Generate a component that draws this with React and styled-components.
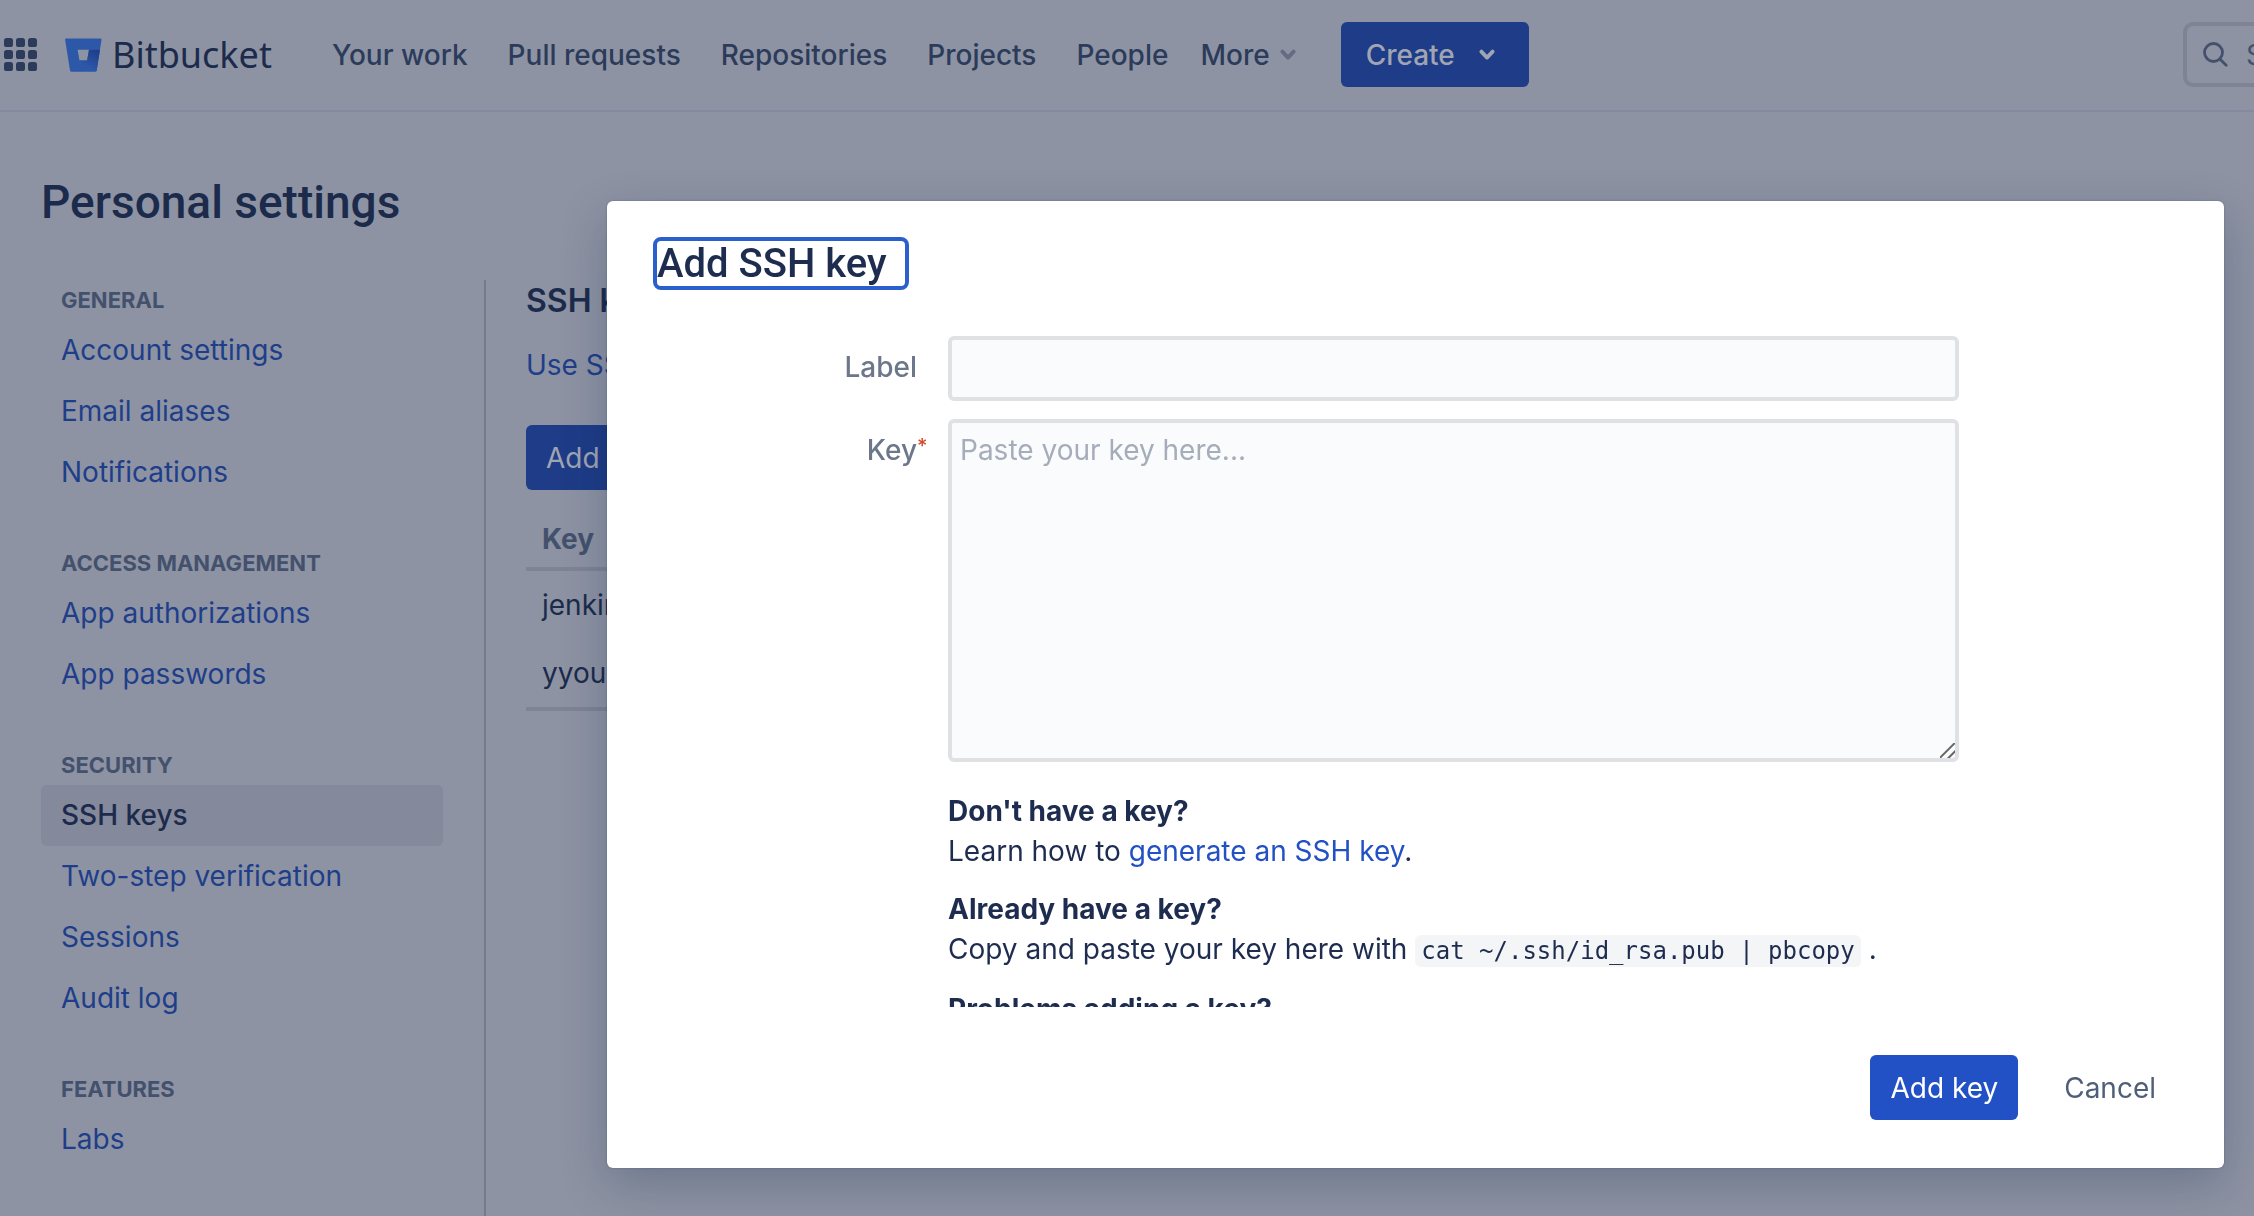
import React from "react";
import styled, { createGlobalStyle } from "styled-components";

const color = {
  page: "#8d93a3",
  heading: "#1c2b4b",
  nav: "#2c3b5a",
  muted: "#44516d",
  link: "#1f3e8a",
  primaryDim: "#1e3c87",
  lineSoft: "#858aa0",
  line: "#7e8495",
  divider: "#747b8c",
  selected: "#84899c",
  text: "#1d2c4f",
  primary: "#2250c5",
  label: "#6c778c",
  field: "#fafbfd",
  fieldBorder: "#dfe1e5",
};

const GlobalStyle = createGlobalStyle`
  * { box-sizing: border-box; }
  html, body, #root { height: 100%; }
  body {
    margin: 0;
    overflow: hidden;
    background: ${color.page};
    color: ${color.heading};
    font-family: Inter, "Liberation Sans", sans-serif;
    font-size: 28px;
    line-height: 40px;
  }
  h1, h2, h3, p, ul { margin: 0; padding: 0; }
  a { text-decoration: none; color: inherit; }
  button, input, textarea { font: inherit; }
`;

const Page = styled.div`
  display: flex;
  flex-direction: column;
  min-height: 100%;
`;

const TopBar = styled.header`
  display: flex;
  align-items: center;
  height: 112px;
  padding: 0 0 1px 4px;
  border-bottom: 2px solid ${color.lineSoft};
  overflow: hidden;
`;

const SwitcherButton = styled.button`
  display: flex;
  padding: 0;
  border: 0;
  background: none;
`;

const Brand = styled.a`
  display: flex;
  align-items: center;
  gap: 10px;
  margin-left: 28px;
  font-family: "Noto Sans", "Open Sans", sans-serif;
  font-size: 36px;
  color: ${color.heading};
`;

const NavList = styled.nav`
  display: flex;
  gap: 40px;
  margin-left: 60px;
  font-weight: 500;
  color: ${color.nav};
`;

const MoreButton = styled.button`
  display: flex;
  align-items: center;
  gap: 10px;
  margin-left: 32px;
  padding: 0;
  border: 0;
  background: none;
  font-weight: 500;
  color: ${color.nav};
`;

const Button = styled.button`
  display: inline-flex;
  align-items: center;
  gap: 24px;
  height: 65px;
  padding: 0 20px;
  border: 0;
  border-radius: 6px;
  white-space: nowrap;
  color: ${(p) => (p.$dim ? "#a0a5b3" : "#fff")};
  background: ${(p) => (p.$dim ? color.primaryDim : color.primary)};
`;

const CreateButton = styled(Button)`
  margin-left: 45px;
  padding: 0 34px 0 25px;
  font-weight: 500;
`;

const SearchBox = styled.label`
  display: flex;
  align-items: center;
  gap: 18px;
  width: 280px;
  height: 65px;
  flex: none;
  margin: 0 -209px 0 auto;
  padding-left: 16px;
  border: 4px solid ${color.line};
  border-radius: 10px;
  color: ${color.muted};
`;

const SearchInput = styled.input`
  width: 180px;
  padding: 0;
  border: 0;
  outline: 0;
  background: none;
  color: ${color.muted};
  &::placeholder { color: ${color.muted}; opacity: 1; }
`;

const PageTitle = styled.h1`
  padding: 60px 0 0 41px;
  font-family: Roboto, Inter, sans-serif;
  font-size: 46px;
  line-height: 60px;
  font-weight: 500;
`;

const Columns = styled.div`
  display: flex;
  flex: 1;
  margin-top: 48px;
`;

const Sidebar = styled.nav`
  width: 486px;
  flex: none;
  padding: 0 41px;
  border-right: 2px solid ${color.divider};
`;

const Group = styled.section`
  margin-bottom: 40px;
`;

const GroupTitle = styled.h3`
  padding-left: 20px;
  font-size: 22px;
  font-weight: 700;
  text-transform: uppercase;
  color: ${color.muted};
`;

const SideLink = styled.a`
  display: block;
  padding-left: 20px;
  border-radius: 6px;
  line-height: 61px;
  font-weight: ${(p) => (p.$active ? 500 : 400)};
  color: ${(p) => (p.$active ? color.heading : color.link)};
  background: ${(p) => (p.$active ? color.selected : "none")};
`;

const Main = styled.main`
  flex: 1;
  display: flex;
  flex-direction: column;
  align-items: flex-start;
  padding: 0 80px 0 40px;
`;

const SectionTitle = styled.h2`
  font-size: 32px;
  line-height: 42px;
  font-weight: 600;
`;

const HelpLink = styled.a`
  margin: 23px 0 40px;
  color: ${color.link};
`;

const KeyTable = styled.table`
  width: 100%;
  margin-top: 20px;
  border-collapse: collapse;
  border-bottom: 4px solid ${color.line};
  th {
    height: 59px;
    padding: 0 0 0 16px;
    border-bottom: 4px solid ${color.line};
    text-align: left;
    font-weight: 700;
    color: ${color.muted};
  }
  td {
    height: 70px;
    padding: 0 0 0 16px;
  }
`;

const Blanket = styled.div`
  position: fixed;
  inset: 0;
  display: flex;
  justify-content: flex-end;
  padding: 201px 30px 48px;
`;

const Dialog = styled.section`
  flex: 0 1 1617px;
  display: flex;
  flex-direction: column;
  border-radius: 6px;
  background: #fff;
  color: ${color.text};
  box-shadow: 0 0 2px rgba(9, 30, 66, 0.3), 0 16px 48px rgba(9, 30, 66, 0.24);
`;

const DialogHeader = styled.header`
  padding: 40px 50px 50px;
  display: flex;
`;

const DialogTitle = styled.h2`
  padding-right: 18px;
  border-radius: 4px;
  outline: 4px solid #2a60cc;
  outline-offset: 0;
  font-family: Roboto, Inter, sans-serif;
  font-size: 40px;
  line-height: 45px;
  font-weight: 500;
`;

const DialogBody = styled.form`
  flex: 1 1 0;
  min-height: 0;
  overflow: hidden;
  padding: 0 50px;
`;

const FieldRow = styled.div`
  display: grid;
  grid-template-columns: 260px minmax(0, 1011px);
  column-gap: 31px;
  margin-bottom: 18px;
`;

const FieldLabel = styled.label`
  display: flex;
  justify-content: flex-end;
  padding-top: 11px;
  font-weight: 500;
  color: ${color.label};
`;

const Required = styled.span`
  width: 0;
  font-size: 20px;
  line-height: 32px;
  color: #d04a2c;
`;

const TextField = styled.input`
  width: 100%;
  height: 65px;
  padding: 0 8px;
  border: 4px solid ${color.fieldBorder};
  border-radius: 6px;
  outline: 0;
  background: ${color.field};
`;

const KeyField = styled.textarea`
  display: block;
  width: 100%;
  height: 343px;
  padding: 7px 8px;
  border: 4px solid ${color.fieldBorder};
  border-radius: 6px;
  outline: 0;
  resize: vertical;
  background: ${color.field};
  &::placeholder { color: #a5adba; opacity: 1; }
  &::-webkit-resizer {
    background: linear-gradient(
      135deg,
      transparent 9px, #666 10px, #666 11px, transparent 12px,
      transparent 15px, #666 16px, #666 17px, transparent 18px
    );
  }
`;

const FieldHelp = styled.div`
  grid-column: 2;
  margin-top: 29px;
`;

const HelpBlock = styled.p`
  margin-bottom: 18px;
  a { color: ${color.primary}; }
`;

const Strong = styled.strong`
  display: block;
  font-weight: 700;
`;

const Code = styled.code`
  padding: 2px 6px;
  border-radius: 6px;
  background: #f4f5f7;
  font-family: "DejaVu Sans Mono", monospace;
  font-size: 24px;
`;

const DialogFooter = styled.footer`
  display: flex;
  justify-content: flex-end;
  gap: 26px;
  padding: 48px;
`;

const CancelButton = styled(Button)`
  color: #505f79;
  background: none;
`;

const DOTS = [0, 12, 24];

const SwitcherIcon = () => (
  <svg width="33" height="33" viewBox="0 0 33 33" fill={color.nav} aria-hidden="true">
    {DOTS.map((y) => DOTS.map((x) => <rect key={`${x}-${y}`} x={x} y={y} width="9" height="9" rx="2.6" />))}
  </svg>
);

const BucketLogo = () => (
  <svg width="37" height="34" viewBox="0 0 37 34" aria-hidden="true">
    <defs>
      <linearGradient id="bucket-shade" x1="1" y1="0" x2="0.3" y2="1">
        <stop offset="0.1" stopColor="#1f3f8c" />
        <stop offset="0.75" stopColor="#2d58a8" />
      </linearGradient>
    </defs>
    <path
      fill="#2d58a8"
      fillRule="evenodd"
      d="M1.2 0.5h34.2a1.1 1.1 0 0 1 1.1 1.3l-4.8 30.6a1.3 1.3 0 0 1-1.3 1.1H6.4A1.5 1.5 0 0 1 5 32.2L.1 1.8A1.1 1.1 0 0 1 1.2.5zM14.5 22.6h7.6l1.9-10.9H12.6z"
    />
    <path fill="url(#bucket-shade)" d="M35 11.7H24l-1.9 10.9h-7.6L5.5 33.2c.3.2.6.3.9.3h24a1.3 1.3 0 0 0 1.3-1.1z" />
  </svg>
);

const Chevron = ({ stroke }) => (
  <svg width="16" height="12" viewBox="0 0 16 12" fill="none" stroke={stroke} strokeWidth="3.8" strokeLinecap="round" strokeLinejoin="round" aria-hidden="true">
    <path d="M2.4 2.6 8 8.6l5.6-6" />
  </svg>
);

const SearchIcon = () => (
  <svg width="25" height="25" viewBox="0 0 25 25" fill="none" stroke={color.muted} strokeWidth="2.8" strokeLinecap="round" aria-hidden="true">
    <circle cx="10.5" cy="10.5" r="9" />
    <path d="m17.4 17.4 5.8 5.8" />
  </svg>
);

const NAV = ["Your work", "Pull requests", "Repositories", "Projects", "People"];

const GROUPS = [
  ["General", ["Account settings", "Email aliases", "Notifications"]],
  ["Access management", ["App authorizations", "App passwords"]],
  ["Security", ["SSH keys", "Two-step verification", "Sessions", "Audit log"]],
  ["Features", ["Labs"]],
];

const KEYS = ["jenkins", "yyoung"];

export default function App() {
  return (
    <>
      <GlobalStyle />
      <Page>
        <TopBar>
          <SwitcherButton type="button" aria-label="Switch to">
            <SwitcherIcon />
          </SwitcherButton>
          <Brand href="#">
            <BucketLogo />
            Bitbucket
          </Brand>
          <NavList>
            {NAV.map((item) => (
              <a key={item} href="#">{item}</a>
            ))}
          </NavList>
          <MoreButton type="button">
            More
            <Chevron stroke="#646c84" />
          </MoreButton>
          <CreateButton type="button" $dim>
            Create
            <Chevron stroke="#a0a5b3" />
          </CreateButton>
          <SearchBox>
            <SearchIcon />
            <SearchInput type="text" placeholder="Search" aria-label="Search" />
          </SearchBox>
        </TopBar>
        <PageTitle>Personal settings</PageTitle>
        <Columns>
          <Sidebar>
            {GROUPS.map(([title, items]) => (
              <Group key={title}>
                <GroupTitle>{title}</GroupTitle>
                {items.map((item) => (
                  <SideLink key={item} href="#" $active={item === "SSH keys"}>{item}</SideLink>
                ))}
              </Group>
            ))}
          </Sidebar>
          <Main>
            <SectionTitle>SSH keys</SectionTitle>
            <HelpLink href="#">Use SSH</HelpLink>
            <Button type="button" $dim>Add key</Button>
            <KeyTable>
              <thead>
                <tr><th>Key</th></tr>
              </thead>
              <tbody>
                {KEYS.map((name) => (
                  <tr key={name}><td>{name}</td></tr>
                ))}
              </tbody>
            </KeyTable>
          </Main>
        </Columns>
      </Page>
      <Blanket>
        <Dialog role="dialog" aria-labelledby="dialog-title">
          <DialogHeader>
            <DialogTitle id="dialog-title">Add SSH key</DialogTitle>
          </DialogHeader>
          <DialogBody id="key-form">
            <FieldRow>
              <FieldLabel htmlFor="key-label"><span>Label</span></FieldLabel>
              <TextField id="key-label" type="text" />
            </FieldRow>
            <FieldRow>
              <FieldLabel htmlFor="key-value">
                Key<Required>*</Required>
              </FieldLabel>
              <KeyField id="key-value" placeholder="Paste your key here..." />
              <FieldHelp>
                <HelpBlock>
                  <Strong>Don't have a key?</Strong>
                  Learn how to <a href="#">generate an SSH key</a>.
                </HelpBlock>
                <HelpBlock>
                  <Strong>Already have a key?</Strong>
                  Copy and paste your key here with <Code>cat ~/.ssh/id_rsa.pub | pbcopy</Code> .
                </HelpBlock>
                <HelpBlock>
                  <Strong>Problems adding a key?</Strong>
                </HelpBlock>
              </FieldHelp>
            </FieldRow>
          </DialogBody>
          <DialogFooter>
            <Button type="submit" form="key-form">Add key</Button>
            <CancelButton type="button">Cancel</CancelButton>
          </DialogFooter>
        </Dialog>
      </Blanket>
    </>
  );
}
